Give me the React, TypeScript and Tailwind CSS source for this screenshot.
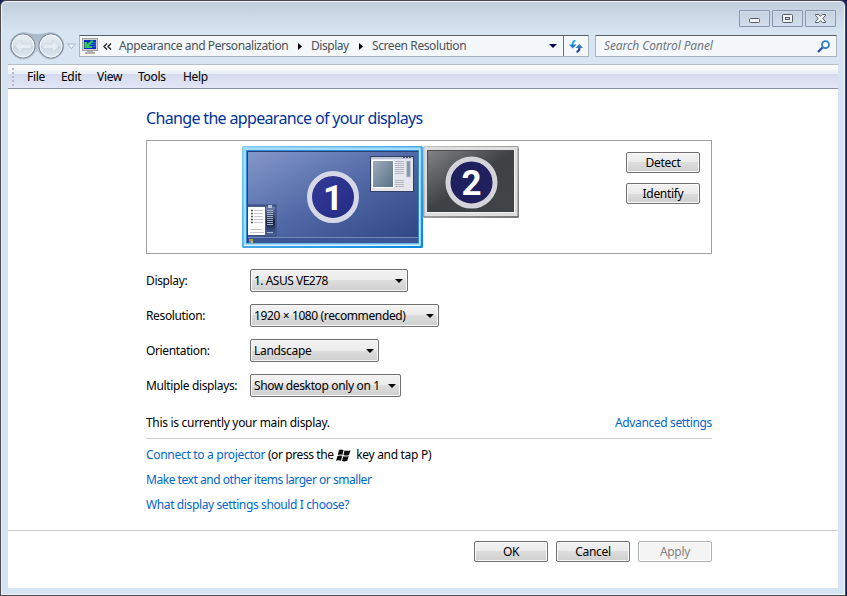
import React, { ReactNode } from "react";
import clsx from "clsx";

const MENU_ITEMS = [
  { name: "File", className: "w-[34px]" },
  { name: "Edit", className: "w-[36px]" },
  { name: "View", className: "w-[41px]" },
  { name: "Tools", className: "w-[45px]" },
  { name: "Help", className: "w-[40px]" },
];

const SETTINGS = [
  {
    label: "Display:",
    value: "1. ASUS VE278",
    className: "w-[158px] tracking-[-0.5px]",
  },
  {
    label: "Resolution:",
    value: "1920 × 1080 (recommended)",
    className: "w-[189px] tracking-[-0.38px]",
  },
  { label: "Orientation:", value: "Landscape", className: "w-[129px]" },
  {
    label: "Multiple displays:",
    value: "Show desktop only on 1",
    className: "w-[151px] tracking-[-0.36px]",
  },
];

const NavButtons = () => (
  <svg width="68" height="28" viewBox="0 0 68 28" className="shrink-0">
    <defs>
      <linearGradient id="nav-fill" x1="0" y1="0" x2="0" y2="1">
        <stop offset="0" stopColor="#e9eef3" />
        <stop offset="0.48" stopColor="#d8e1e9" />
        <stop offset="0.5" stopColor="#c9d5df" />
        <stop offset="1" stopColor="#e0eaf2" />
      </linearGradient>
      <linearGradient id="nav-tray" x1="0" y1="0" x2="0" y2="1">
        <stop offset="0" stopColor="#a3b2c1" />
        <stop offset="1" stopColor="#cfdbe7" />
      </linearGradient>
    </defs>
    <path
      d="M14 .7C19 .7 21 2.4 28 2.4S37 .7 42 .7A13.2 13.2 0 1 1 30 20Q28 17 26 20A13.2 13.2 0 1 1 14 .7Z"
      fill="url(#nav-tray)"
      stroke="#a5b3c1"
      strokeWidth=".6"
    />
    {[14, 42].map((cx) => (
      <g key={cx}>
        <circle
          cx={cx}
          cy="14"
          r="12"
          fill="url(#nav-fill)"
          stroke="#7c8997"
          strokeWidth="1.1"
        />
        <circle
          cx={cx}
          cy="14"
          r="10.9"
          fill="none"
          stroke="#f4f8fb"
          strokeWidth=".9"
        />
      </g>
    ))}
    <path
      d="M6 14 12.500 8v4H22v4.500H12.500v4Z"
      fill="#e6edf2"
      stroke="#ccd6df"
      strokeWidth=".7"
    />
    <path
      d="M50 14 43.500 8v4H34v4.500h9.500v4Z"
      fill="#e6edf2"
      stroke="#ccd6df"
      strokeWidth=".7"
    />
    <path d="M58.500 12h8L62.500 16.500Z" fill="#eff5fa" stroke="#a8b5c2" />
  </svg>
);

const ControlPanelIcon = () => (
  <svg width="16" height="16" viewBox="0 0 16 16" className="shrink-0">
    <path d="M5 12h6v2h2v2H3v-2h2Z" fill="#b3b1ab" />
    <rect x=".5" y=".5" width="15" height="12" fill="#d4d1ca" stroke="#a5a49f" />
    <rect x="2" y="2" width="12" height="9" fill="#062acb" />
    <path d="M9 4.500h5M8 6.500h6M7 8.500h7" stroke="#157eda" />
    <path d="M2.500 4H5v2l5-4 1.500 1-4.500 5H10v2H2.500Z" fill="#35c653" />
  </svg>
);

const RefreshIcon = () => (
  <svg width="14" height="13" viewBox="0 0 14 13">
    <path d="M6.500 .5C4 1 3.500 2.500 3.500 5" fill="none" stroke="#35a5dc" strokeWidth="2" />
    <path d="M0 4.500h7.500L3.800 8.500Z" fill="#267bc5" />
    <path d="M10.500 7.500c0 2.700-.7 4-3 4.500" fill="none" stroke="#27459c" strokeWidth="2" />
    <path d="M6.500 8h7.500L10.300 4Z" fill="#3576b9" />
  </svg>
);

const SearchIcon = () => (
  <svg width="14" height="13" viewBox="0 0 14 13">
    <path d="m1 12 4.500-4.500" stroke="#2d4da3" strokeWidth="2.3" />
    <circle cx="8.500" cy="4.700" r="3.500" fill="#f7fbfe" stroke="#3380c6" strokeWidth="1.8" />
  </svg>
);

const CaptionButton = ({ children }: { children: ReactNode }) => (
  <button className="flex h-[17px] w-[31px] items-center justify-center rounded-[1px] border border-[#8796ae] bg-linear-to-b from-[#c4d1de] to-[#d2deeb] shadow-[inset_0_0_0_1px_#d0dce7]">
    {children}
  </button>
);

const TitleBar = () => (
  <div className="flex h-[33px] shrink-0 justify-end gap-[2px] pt-[9px] pr-[9px]">
    <CaptionButton>
      <svg width="12" height="11" viewBox="0 0 12 11">
        <rect x=".5" y="5.500" width="10" height="4" rx="1" fill="#f4f4f4" stroke="#545b6b" />
      </svg>
    </CaptionButton>
    <CaptionButton>
      <svg width="12" height="11" viewBox="0 0 12 11">
        <rect x=".5" y="1.500" width="10" height="8" rx="1" fill="#f4f4f4" stroke="#545b6b" />
        <rect x="3.500" y="4.500" width="4" height="2" fill="#cad8e7" stroke="#545b6b" />
      </svg>
    </CaptionButton>
    <CaptionButton>
      <svg width="12" height="11" viewBox="0 0 12 11">
        <path
          d="M.5 1.500h3.200L5.500 3.300 7.300 1.500h3.200v1L7.800 5.500l2.700 3v1H7.300L5.500 7.700 3.700 9.500H.5v-1l2.700-3-2.700-3Z"
          fill="#f4f4f4"
          stroke="#545b6b"
        />
      </svg>
    </CaptionButton>
  </div>
);

const Crumb = ({ children, className }: { children: ReactNode; className: string }) => (
  <span className={clsx("shrink-0 whitespace-nowrap text-[#4b5259]", className)}>
    {children}
  </span>
);

const CrumbArrow = ({ className }: { className: string }) => (
  <svg width="4" height="7" viewBox="0 0 4 7" className={clsx("shrink-0", className)}>
    <path d="M0 0 4 3.500 0 7Z" fill="#000" />
  </svg>
);

const AddressBar = () => (
  <div className="flex h-[30px] shrink-0 pl-[8px]">
    <div className="-mt-[2px]">
      <NavButtons />
    </div>
    <div className="mt-[1px] ml-[2px] flex h-[22px] w-[510px] items-center border border-[#a9b3bd] border-t-[#555c63] bg-[#f4f8fb]">
      <div className="ml-[2px]">
        <ControlPanelIcon />
      </div>
      <svg width="9" height="7" viewBox="0 0 9 7" className="ml-[5px] shrink-0">
        <path d="M4 .5 1 3.500l3 3M8 .5 5 3.500l3 3" fill="none" stroke="#222" strokeWidth="1.3" />
      </svg>
      <Crumb className="ml-[7px] w-[169px] tracking-[-0.42px]">
        Appearance and Personalization
      </Crumb>
      <CrumbArrow className="ml-[10px]" />
      <Crumb className="ml-[9px] w-[39px] tracking-[-0.45px]">Display</Crumb>
      <CrumbArrow className="ml-[9px]" />
      <Crumb className="ml-[9px] w-[95px] tracking-[-0.4px]">Screen Resolution</Crumb>
      <svg width="8" height="4" viewBox="0 0 8 4" className="ml-auto shrink-0">
        <path d="M0 0h8L4 4Z" fill="#000050" />
      </svg>
      <div className="ml-[6px] flex h-full w-[25px] shrink-0 items-center justify-center border-l border-[#686f76]">
        <RefreshIcon />
      </div>
    </div>
    <div className="mt-[1px] ml-[6px] flex h-[22px] w-[242px] items-center justify-between rounded-[1px] border border-[#a9b3bd] border-t-[#555c63] bg-[#f4f8fb] pr-[5px] pl-[8px]">
      <span className="tracking-[-0.1px] whitespace-nowrap text-[#70777e] italic">
        Search Control Panel
      </span>
      <SearchIcon />
    </div>
  </div>
);

const MenuBar = () => (
  <div className="flex h-[25px] shrink-0 items-center border-t border-b border-t-[#b4bfca] border-b-[#8b91a6] bg-[linear-gradient(#ffffff_0,#e8edf6_9px,#d5dbee_9px,#e2e6f6_23px)]">
    <div className="ml-[4px] flex w-[2px] flex-col gap-[2px]">
      {[0, 1, 2, 3, 4].map((dot) => (
        <span key={dot} className="h-[2px] w-[2px] bg-[#b5bcc9]" />
      ))}
    </div>
    <div className="ml-[13px] flex">
      {MENU_ITEMS.map((item) => (
        <span key={item.name} className={clsx("whitespace-nowrap", item.className)}>
          {item.name}
        </span>
      ))}
    </div>
  </div>
);

const PrimaryMonitor = () => (
  <svg width="181" height="102" viewBox="0 0 181 102" className="shrink-0">
    <defs>
      <linearGradient id="desktop" x1="0" y1="0" x2="1" y2="1">
        <stop offset="0" stopColor="#8598c9" />
        <stop offset=".5" stopColor="#5068a6" />
        <stop offset="1" stopColor="#304583" />
      </linearGradient>
      <linearGradient id="glow" x1="0" y1="0" x2="1" y2="1">
        <stop offset="0" stopColor="#83cbf5" />
        <stop offset="1" stopColor="#0787df" />
      </linearGradient>
      <linearGradient id="preview" x1="0" y1="0" x2="1" y2="1">
        <stop offset="0" stopColor="#9daebb" />
        <stop offset="1" stopColor="#596e86" />
      </linearGradient>
      <linearGradient id="gadget" x1="0" y1="0" x2="0" y2="1">
        <stop offset="0" stopColor="#6f82ad" />
        <stop offset=".55" stopColor="#151e3c" />
        <stop offset="1" stopColor="#425f96" />
      </linearGradient>
      <linearGradient id="badge-one" x1="0" y1="0" x2="1" y2="1">
        <stop offset="0" stopColor="#343a99" />
        <stop offset="1" stopColor="#222b83" />
      </linearGradient>
    </defs>
    <rect width="181" height="102" rx="1.500" fill="url(#glow)" />
    <rect x="1.500" y="1.500" width="177" height="98" fill="#a5dcfa" />
    <path d="M2 99.500h176V3" fill="none" stroke="#d9f4ff" />
    <rect x="4" y="4" width="173" height="93.500" fill="#2e8dd0" />
    <rect x="5" y="5" width="171" height="92" fill="url(#desktop)" />
    <path d="M5.500 97V5.500H176" fill="none" stroke="#283f7c" />
    <rect x="6" y="91" width="170" height="6" fill="#3b5595" />
    <path d="M6 91.500h170" stroke="#7689ba" />
    <path d="M7 93h2v2H7Z" fill="#d97745" />
    <path d="M9 93h2v2H9Z" fill="#80b749" />
    <path d="M7 95h2v2H7Z" fill="#408bcb" />
    <path d="M9 95h2v2H9Z" fill="#d4bd45" />

    <rect x="128.500" y="10.500" width="43" height="35" fill="#e4e6eb" stroke="#323f65" />
    <path d="M129 12h42" stroke="#bdc5d9" strokeWidth="2" />
    <path d="M161 11.500h2m1 0h2m1 0h2" stroke="#4b536c" />
    <rect x="130.500" y="14.500" width="21" height="27" fill="url(#preview)" stroke="#fff" />
    <path
      d="M153 15.500h9m-9 2h9m-9 2h9m-9 2h9m-9 2h9m-9 2h9m-9 2h9m-9 7h9m-9 2h9m-9 2h9m-9 2h9"
      stroke="#b1b6c0"
    />
    <rect x="164.500" y="15" width="4" height="16" fill="#8798ab" stroke="#c9d1da" strokeWidth=".6" />

    <rect x="6" y="59" width="28" height="31" fill="#4a6093" stroke="#344879" />
    <rect x="24" y="61" width="9" height="27" fill="url(#gadget)" />
    <rect x="6" y="61" width="17" height="28" fill="#fff" />
    <path d="M9 64.500h2m-2 3h2m-2 3h2m-2 3h2m-2 3h2" stroke="#55575e" strokeWidth="1.700" />
    <path d="M12 64.500h9m-9 3h9m-9 3h9m-9 3h9m-9 3h9M8 83.500h12m-12 3h14" stroke="#c5c8ce" />
    <path
      d="M25 64.500h6m-6 2h6m-6 2h6m-6 2h6m-6 2h6m-6 2h6m-6 2h6m-6 2h6m-6 8h6"
      stroke="#a6b3ca"
    />
    <rect x="26" y="59" width="4" height="3" fill="#b5bfd3" />

    <circle cx="91" cy="51" r="23.500" fill="url(#badge-one)" stroke="#d6d8e8" strokeWidth="5" />
    <text
      x="91"
      y="63.500"
      textAnchor="middle"
      fill="#fff"
      className="font-['Roboto'] text-[35px] font-bold tracking-normal"
    >
      1
    </text>
  </svg>
);

const SecondaryMonitor = () => (
  <svg width="96" height="72" viewBox="0 0 96 72" className="shrink-0">
    <defs>
      <linearGradient id="gray-screen" x1="0" y1="0" x2="1" y2="1">
        <stop offset="0" stopColor="#828486" />
        <stop offset=".5" stopColor="#3e4244" />
        <stop offset="1" stopColor="#404446" />
      </linearGradient>
      <linearGradient id="gray-edge" x1="0" y1="0" x2="1" y2="1">
        <stop offset="0" stopColor="#c2c2c2" />
        <stop offset="1" stopColor="#777777" />
      </linearGradient>
    </defs>
    <rect width="96" height="72" rx="1.500" fill="url(#gray-edge)" />
    <rect x="1.500" y="1" width="93" height="69" fill="#dedede" />
    <rect x="4" y="4" width="88" height="63" fill="#f0f0f0" />
    <rect x="4" y="4" width="87" height="62" fill="url(#gray-screen)" />
    <path d="M4.500 66V4.500H91" fill="none" stroke="#4c4d4e" />
    <circle cx="48.500" cy="36.500" r="23.500" fill="#20205f" stroke="#d3d3da" strokeWidth="5" />
    <text
      x="48.500"
      y="49"
      textAnchor="middle"
      fill="#fff"
      className="font-['Roboto'] text-[35px] font-bold tracking-normal"
    >
      2
    </text>
  </svg>
);

interface PushButtonProps {
  children: ReactNode;
  disabled?: boolean;
}

const PushButton = ({ children, disabled }: PushButtonProps) => (
  <button
    disabled={disabled}
    className={clsx(
      "flex h-[21px] w-[74px] items-center justify-center rounded-[2px] border whitespace-nowrap",
      disabled
        ? "border-[#adb2b5] bg-[#f4f4f4] text-[#838383] shadow-[inset_0_0_0_1px_#fcfcfc]"
        : "border-[#707070] bg-[linear-gradient(#f2f2f2_0,#ebebeb_50%,#dddddd_50%,#cfcfcf_100%)] shadow-[inset_0_0_0_1px_#fafafa]",
    )}
  >
    {children}
  </button>
);

const Select = ({ value, className }: { value: string; className: string }) => (
  <button
    className={clsx(
      "flex h-[23px] items-center justify-between rounded-[2px] border border-[#707070] bg-[linear-gradient(#f2f2f2_0,#ebebeb_50%,#dddddd_50%,#cfcfcf_100%)] pr-[4px] pl-[3px] whitespace-nowrap shadow-[inset_0_0_0_1px_#f8f8f8]",
      className,
    )}
  >
    <span>{value}</span>
    <svg width="8" height="4" viewBox="0 0 8 4" className="shrink-0">
      <path d="M0 0h8L4 4Z" fill="#000" />
    </svg>
  </button>
);

const WindowsLogo = () => (
  <svg width="15" height="13" viewBox="0 0 15 13" className="shrink-0">
    <path
      d="M3 1Q5 .2 7.500 1L6.500 5.700Q4 5 1.700 6ZM8.500 1.400Q11 2.300 14.500 1.200L13 6Q10.500 7 7.500 6ZM1.500 6.900Q4 6 6.200 6.800L5 11.700Q2.500 10.800 0 11.800ZM7.200 7.200Q10 8 12.700 7L11.300 11.700Q8.500 13 6 12.100Z"
      fill="#111"
    />
  </svg>
);

const Link = ({ children, className }: { children: ReactNode; className?: string }) => (
  <a href="#" className={clsx("whitespace-nowrap text-[#0066cc]", className)}>
    {children}
  </a>
);

const DisplaySettings = () => (
  <div className="ml-[138px] flex h-[441px] w-[566px] shrink-0 flex-col">
    <h1 className="mt-[18px] h-[22px] text-[16px] leading-[22px] tracking-[-0.66px] whitespace-nowrap text-[#003399]">
      Change the appearance of your displays
    </h1>
    <div className="mt-[11px] flex h-[114px] items-start border border-[#a0a0a0] pt-[5px] pl-[95px]">
      <PrimaryMonitor />
      <SecondaryMonitor />
      <div className="mt-[6px] mr-[11px] ml-auto flex flex-col gap-[10px]">
        <PushButton>Detect</PushButton>
        <PushButton>Identify</PushButton>
      </div>
    </div>
    <div className="mt-[15px] flex flex-col gap-[12px]">
      {SETTINGS.map((setting) => (
        <div key={setting.label} className="flex h-[23px] items-center">
          <span className="w-[104px] tracking-[-0.36px] whitespace-nowrap">
            {setting.label}
          </span>
          <Select value={setting.value} className={setting.className} />
        </div>
      ))}
    </div>
    <div className="mt-[15px] flex h-[27px] items-start justify-between border-b border-[#cccccc] pt-[3px]">
      <span>This is currently your main display.</span>
      <Link className="tracking-[-0.36px]">Advanced settings</Link>
    </div>
    <div className="mt-[8px] flex flex-col gap-[9px]">
      <div className="flex items-center whitespace-pre">
        <Link>Connect to a projector</Link>
        <span className="tracking-[-0.4px]"> (or press the </span>
        <WindowsLogo />
        <span className="ml-[2px]"> key and tap P)</span>
      </div>
      <Link className="tracking-[-0.46px]">Make text and other items larger or smaller</Link>
      <Link className="tracking-[-0.38px]">What display settings should I choose?</Link>
    </div>
  </div>
);

export default function App() {
  return (
    <div className="h-[596px] w-[847px] overflow-hidden bg-[#17205b] pr-px font-['Noto_Sans','Open_Sans',sans-serif] text-[12px] leading-[16px] tracking-[-0.3px] text-black">
      <div className="flex h-full w-full flex-col rounded-t-[6px] border border-[#4b494c] bg-[linear-gradient(#c1cedb_0,#d7e4f1_32px)] shadow-[inset_0_0_0_1px_#eff5fa]">
        <TitleBar />
        <AddressBar />
        <div className="mr-[7px] ml-[7px] flex h-[524px] shrink-0 flex-col bg-white">
          <MenuBar />
          <DisplaySettings />
          <div className="flex h-[58px] items-start justify-end gap-[8px] border-t border-[#cccccc] pt-[10px] pr-[126px]">
            <PushButton>OK</PushButton>
            <PushButton>Cancel</PushButton>
            <PushButton disabled>Apply</PushButton>
          </div>
        </div>
      </div>
    </div>
  );
}
